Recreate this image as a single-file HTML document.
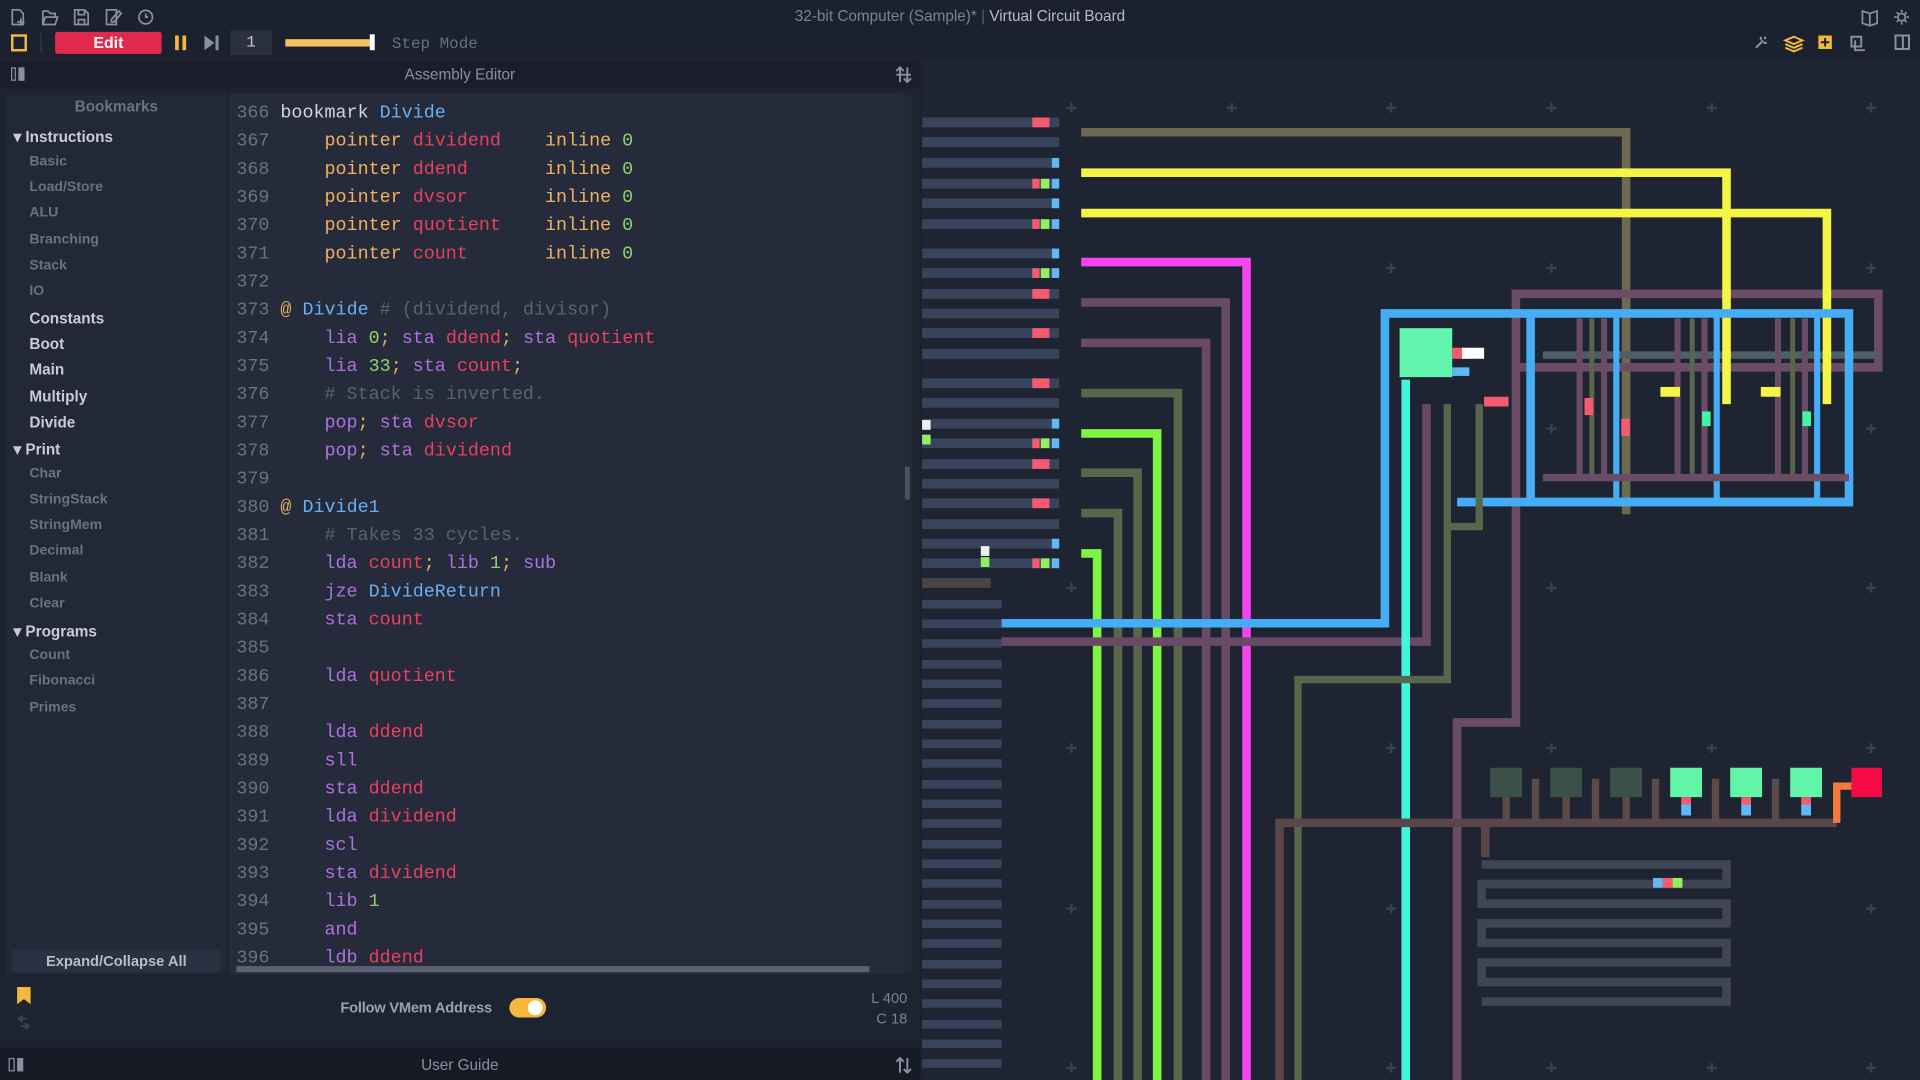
<!DOCTYPE html>
<html><head><meta charset="utf-8">
<style>
html,body{margin:0;padding:0;background:#1c2130;overflow:hidden;width:1920px;height:1080px}
#w{position:absolute;left:0;top:0;width:1568px;height:882px;transform:scale(1.2244898);transform-origin:0 0;font-family:"Liberation Sans",sans-serif;color:#9aa0ad}
.a{position:absolute}
.mono{font-family:"Liberation Mono",monospace}
.code{position:absolute;left:187px;top:76px;width:558px;height:720px;background:#252b3a;overflow:hidden}
.ln{position:absolute;left:6px;font-size:15px;color:#6a7180;font-family:"Liberation Mono",monospace;white-space:pre;line-height:23px}
.cl{position:absolute;left:42px;font-size:15px;font-family:"Liberation Mono",monospace;white-space:pre;color:#d0d4dc;line-height:23px}
.o{color:#b070e0}.r{color:#e8405e}.g{color:#90d070}.b{color:#6aaef0}.y{color:#f0b060}.c{color:#5a6272}.s{color:#e0b060}
.bm{position:absolute;font-size:11.5px;color:#6a7282;font-weight:bold}
.bh{position:absolute;font-size:12.5px;color:#c8ccd4;font-weight:bold}
</style></head><body><div id="w">
<div class="a" style="left:0;top:0;width:1568px;height:48px;background:#1c2130"></div>
<svg class="a" style="left:0;top:0" width="1568" height="48" fill="none" stroke="#8a90a0" stroke-width="1.4">
<path d="M10 8h6l3 3v9h-9z M17 15v6 M14 18h6"/>
<path d="M35 9h4l2 2h4v3 M35 9v11h10l2-6h-10l-2 6"/>
<path d="M61 8h8l3 3v9h-11z M64 8v4h5v-4 M64 20v-4h5v4"/>
<path d="M87 8h8v12h-8z M91 16l6-7 2 2-6 7h-2z"/>
<circle cx="119" cy="14" r="5.5"/><path d="M119 11v3h2"/>
<path d="M1521 9l6 2 6-2v10l-6 2-6-2z M1527 11v10"/>
<circle cx="1553" cy="14" r="3"/><path d="M1553 8v2M1553 18v2M1547 14h2M1557 14h2M1549 10l1.5 1.5M1555.5 16.5l1.5 1.5M1549 18l1.5-1.5M1555.5 11.5l1.5-1.5"/>
</svg>
<div class="a" style="left:0;top:6px;width:1568px;text-align:center;font-size:12.5px;color:#7c8292">32-bit Computer (Sample)* <span style="color:#555c6c">|</span> <span style="color:#b8bcc6">Virtual Circuit Board</span></div>
<div class="a" style="left:9px;top:28px;width:9px;height:10px;border:2px solid #f5b83d"></div>
<div class="a" style="left:33px;top:27px;width:1px;height:16px;background:#333a4a"></div>
<div class="a" style="left:45px;top:26px;width:87px;height:18px;background:#e2284c;border-radius:2px;color:#fff;font-weight:bold;font-size:13px;text-align:center;line-height:18px">Edit</div>
<div class="a" style="left:143px;top:29px;width:3px;height:12px;background:#f5b83d"></div>
<div class="a" style="left:149px;top:29px;width:3px;height:12px;background:#f5b83d"></div>
<svg class="a" style="left:166px;top:28px" width="14" height="14"><path d="M1 1l8 6-8 6z" fill="#8a90a0"/><rect x="10" y="1" width="2.5" height="12" fill="#8a90a0"/></svg>
<div class="a mono" style="left:188px;top:25px;width:34px;height:20px;background:#2a3040;color:#c0c4cc;font-size:13px;text-align:center;line-height:20px">1</div>
<div class="a" style="left:233px;top:32px;width:70px;height:6px;background:#f5c35d"></div>
<div class="a" style="left:302px;top:28px;width:4px;height:13px;background:#fff"></div>
<div class="a mono" style="left:320px;top:28px;font-size:13px;color:#6a7080">Step Mode</div>
<svg class="a" style="left:1430px;top:26px" width="138" height="18" fill="none" stroke-width="1.6">
<path d="M4 13l6-6M8 4v3M12 4l-1 2M13 9h-3" stroke="#8a90a0"/>
<path d="M35 4l7 3-7 3-7-3z M28 10l7 3 7-3 M28 13l7 3 7-3" stroke="#f5b83d"/>
<rect x="55" y="3" width="11" height="11" fill="#f5b83d" stroke="none"/><path d="M60.5 5v7M57 8.5h7" stroke="#1c2130"/>
<path d="M82 4h8v8h-8z M85 7v8h8" stroke="#8a90a0"/>
<rect x="118" y="3" width="11" height="11" stroke="#8a90a0"/><path d="M124 3v11" stroke="#8a90a0"/>
</svg>
<div class="a" style="left:0;top:48px;width:751px;height:800px;background:#1e2330"></div>
<div class="a" style="left:0;top:50px;width:751px;height:22px;background:#191e2a"></div>
<div class="a" style="left:9px;top:55px;width:4px;height:11px;border:1.5px solid #8a90a0;box-sizing:border-box"></div>
<div class="a" style="left:15px;top:55px;width:5px;height:11px;background:#8a90a0"></div>
<div class="a" style="left:0;top:54px;width:751px;text-align:center;font-size:12.5px;color:#8a90a0">Assembly Editor</div>
<svg class="a" style="left:731px;top:54px" width="14" height="14" stroke="#8a90a0" stroke-width="1.6" fill="none"><path d="M4 1v12M1 4l3-3 3 3M10 1v12M7 10l3 3 3-3M1 7h12"/></svg>
<div class="a" style="left:5px;top:76px;width:180px;height:720px;background:#232836"></div>
<div class="a" style="left:5px;top:80px;width:180px;text-align:center;font-size:12.5px;color:#6a7282;font-weight:bold">Bookmarks</div>
<div class="bh" style="left:11px;top:104px">▾ Instructions</div>
<div class="bm" style="left:24px;top:126px">Basic</div>
<div class="bm" style="left:24px;top:147px">Load/Store</div>
<div class="bm" style="left:24px;top:168px">ALU</div>
<div class="bm" style="left:24px;top:190px">Branching</div>
<div class="bm" style="left:24px;top:211px">Stack</div>
<div class="bm" style="left:24px;top:232px">IO</div>
<div class="bh" style="left:24px;top:253px">Constants</div>
<div class="bh" style="left:24px;top:274px">Boot</div>
<div class="bh" style="left:24px;top:295px">Main</div>
<div class="bh" style="left:24px;top:317px">Multiply</div>
<div class="bh" style="left:24px;top:338px">Divide</div>
<div class="bh" style="left:11px;top:359px">▾ Print</div>
<div class="bm" style="left:24px;top:381px">Char</div>
<div class="bm" style="left:24px;top:402px">StringStack</div>
<div class="bm" style="left:24px;top:423px">StringMem</div>
<div class="bm" style="left:24px;top:444px">Decimal</div>
<div class="bm" style="left:24px;top:466px">Blank</div>
<div class="bm" style="left:24px;top:487px">Clear</div>
<div class="bh" style="left:11px;top:508px">▾ Programs</div>
<div class="bm" style="left:24px;top:529px">Count</div>
<div class="bm" style="left:24px;top:550px">Fibonacci</div>
<div class="bm" style="left:24px;top:572px">Primes</div>
<div class="a" style="left:10px;top:776px;width:170px;height:18px;background:#2a3142;border-radius:2px;text-align:center;font-size:12px;line-height:18px;color:#b8bcc6;font-weight:bold">Expand/Collapse All</div>
<div class="code">
<div class="ln" style="top:5px">366
367
368
369
370
371
372
373
374
375
376
377
378
379
380
381
382
383
384
385
386
387
388
389
390
391
392
393
394
395
396</div>
<div class="cl" style="top:5px">bookmark <span class="b">Divide</span>
    <span class="y">pointer</span> <span class="r">dividend</span>    <span class="y">inline</span> <span class="g">0</span>
    <span class="y">pointer</span> <span class="r">ddend</span>       <span class="y">inline</span> <span class="g">0</span>
    <span class="y">pointer</span> <span class="r">dvsor</span>       <span class="y">inline</span> <span class="g">0</span>
    <span class="y">pointer</span> <span class="r">quotient</span>    <span class="y">inline</span> <span class="g">0</span>
    <span class="y">pointer</span> <span class="r">count</span>       <span class="y">inline</span> <span class="g">0</span>

<span class="s">@</span> <span class="b">Divide</span> <span class="c"># (dividend, divisor)</span>
    <span class="o">lia</span> <span class="g">0</span><span class="s">;</span> <span class="o">sta</span> <span class="r">ddend</span><span class="s">;</span> <span class="o">sta</span> <span class="r">quotient</span>
    <span class="o">lia</span> <span class="g">33</span><span class="s">;</span> <span class="o">sta</span> <span class="r">count</span><span class="s">;</span>
    <span class="c"># Stack is inverted.</span>
    <span class="o">pop</span><span class="s">;</span> <span class="o">sta</span> <span class="r">dvsor</span>
    <span class="o">pop</span><span class="s">;</span> <span class="o">sta</span> <span class="r">dividend</span>

<span class="s">@</span> <span class="b">Divide1</span>
    <span class="c"># Takes 33 cycles.</span>
    <span class="o">lda</span> <span class="r">count</span><span class="s">;</span> <span class="o">lib</span> <span class="g">1</span><span class="s">;</span> <span class="o">sub</span>
    <span class="o">jze</span> <span class="b">DivideReturn</span>
    <span class="o">sta</span> <span class="r">count</span>

    <span class="o">lda</span> <span class="r">quotient</span>

    <span class="o">lda</span> <span class="r">ddend</span>
    <span class="o">sll</span>
    <span class="o">sta</span> <span class="r">ddend</span>
    <span class="o">lda</span> <span class="r">dividend</span>
    <span class="o">scl</span>
    <span class="o">sta</span> <span class="r">dividend</span>
    <span class="o">lib</span> <span class="g">1</span>
    <span class="o">and</span>
    <span class="o">ldb</span> <span class="r">ddend</span></div>
<div class="a" style="left:550px;top:0;width:8px;height:720px;background:#222838"></div>
<div class="a" style="left:552px;top:305px;width:4px;height:27px;background:#4a5264"></div>
<div class="a" style="left:6px;top:713px;width:517px;height:5px;background:#5a6272"></div>
</div>
<svg class="a" style="left:13px;top:805px" width="14" height="40"><path d="M1 1h11v14l-5.5-4-5.5 4z" fill="#f5b83d"/><path d="M2 27l3-2v4zM11 33l-3 2v-4zM4 27h5M9 33H4" stroke="#3a4152" stroke-width="1.5" fill="#3a4152"/></svg>
<div class="a" style="left:278px;top:816px;font-size:12px;color:#9aa0ad;font-weight:bold;letter-spacing:-0.2px">Follow VMem Address</div>
<div class="a" style="left:416px;top:815px;width:30px;height:16px;border-radius:8px;background:#f5b83d"></div>
<div class="a" style="left:431px;top:817px;width:12px;height:12px;border-radius:6px;background:#fff"></div>
<div class="a" style="left:680px;top:807px;width:61px;text-align:right;font-size:12px;color:#7a8090;line-height:17px">L 400<br>C 18</div>
<div class="a" style="left:0;top:856px;width:751px;height:26px;background:#161a25"></div>
<div class="a" style="left:7px;top:864px;width:5px;height:11px;border:1.5px solid #8a90a0;box-sizing:border-box"></div>
<div class="a" style="left:14px;top:864px;width:5px;height:11px;background:#8a90a0"></div>
<div class="a" style="left:0;top:863px;width:751px;text-align:center;font-size:12.5px;color:#8a90a0">User Guide</div>
<svg class="a" style="left:731px;top:863px" width="14" height="14" stroke="#8a90a0" stroke-width="1.6" fill="none"><path d="M4 1v12M1 4l3-3 3 3M10 1v12M7 10l3 3 3-3"/></svg>
<svg class="a" style="left:753px;top:48px" width="815" height="834" viewBox="753 48 815 834">
<rect x="753" y="48" width="815" height="834" fill="#1f2433"/>
<g stroke="#394053" stroke-width="2">
<path d="M871 88h8M875 84v8M1002 88h8M1006 84v8M1132 88h8M1136 84v8M1263 88h8M1267 84v8M1394 88h8M1398 84v8M1524 88h8M1528 84v8
M1132 219h8M1136 215v8M1263 219h8M1267 215v8M1524 219h8M1528 215v8M1524 350h8M1528 346v8M1263 350h8M1267 346v8
M871 480h8M875 476v8M1263 480h8M1267 476v8M1524 480h8M1528 476v8
M871 611h8M875 607v8M1132 611h8M1136 607v8M1263 611h8M1267 607v8M1394 611h8M1398 607v8M1524 611h8M1528 607v8
M871 742h8M875 738v8M1132 742h8M1136 738v8M1524 742h8M1528 738v8M871 872h8M875 868v8M1132 872h8M1136 868v8M1263 872h8M1267 868v8M1394 872h8M1398 868v8M1524 872h8M1528 868v8"/>
</g>
<g fill="#38435c">
<rect x="753" y="96" width="112" height="8"/><rect x="753" y="112" width="112" height="8"/>
<rect x="753" y="129" width="112" height="8"/><rect x="753" y="146" width="112" height="8"/>
<rect x="753" y="162" width="112" height="8"/><rect x="753" y="179" width="112" height="8"/>
<rect x="753" y="203" width="112" height="8"/><rect x="753" y="219" width="112" height="8"/>
<rect x="753" y="236" width="112" height="8"/><rect x="753" y="252" width="112" height="8"/>
<rect x="753" y="268" width="112" height="8"/><rect x="753" y="285" width="112" height="8"/>
<rect x="753" y="309" width="112" height="8"/><rect x="753" y="325" width="112" height="8"/>
<rect x="753" y="342" width="112" height="8"/><rect x="753" y="358" width="112" height="8"/>
<rect x="753" y="375" width="112" height="8"/><rect x="753" y="391" width="112" height="8"/>
<rect x="753" y="407" width="112" height="8"/><rect x="753" y="424" width="112" height="8"/>
<rect x="753" y="440" width="112" height="8"/><rect x="753" y="456" width="112" height="8"/>
</g>
<g fill="#f55a70"><rect x="843" y="96" width="14" height="8"/><rect x="843" y="146" width="6" height="8"/><rect x="843" y="179" width="6" height="8"/><rect x="843" y="219" width="6" height="8"/><rect x="843" y="236" width="14" height="8"/><rect x="843" y="268" width="14" height="8"/><rect x="843" y="309" width="14" height="8"/><rect x="843" y="358" width="6" height="8"/><rect x="843" y="375" width="14" height="8"/><rect x="843" y="407" width="14" height="8"/><rect x="843" y="456" width="6" height="8"/></g>
<g fill="#60b8f5"><rect x="859" y="129" width="6" height="8"/><rect x="859" y="146" width="6" height="8"/><rect x="859" y="162" width="6" height="8"/><rect x="859" y="179" width="6" height="8"/><rect x="859" y="203" width="6" height="8"/><rect x="859" y="219" width="6" height="8"/><rect x="859" y="342" width="6" height="8"/><rect x="859" y="358" width="6" height="8"/><rect x="859" y="440" width="6" height="8"/><rect x="859" y="456" width="6" height="8"/></g>
<g fill="#90f060"><rect x="850" y="146" width="7" height="8"/><rect x="850" y="179" width="7" height="8"/><rect x="850" y="219" width="7" height="8"/><rect x="850" y="358" width="7" height="8"/><rect x="850" y="456" width="7" height="8"/><rect x="753" y="355" width="7" height="8"/><rect x="801" y="455" width="7" height="8"/></g>
<rect x="753" y="343" width="7" height="8" fill="#eee"/><rect x="801" y="446" width="7" height="8" fill="#eee"/>
<rect x="753" y="472" width="56" height="8" fill="#4a4446"/>
<g fill="#38435c">
<rect x="753" y="490" width="65" height="7"/><rect x="753" y="506" width="65" height="7"/><rect x="753" y="522" width="65" height="7"/><rect x="753" y="539" width="65" height="7"/><rect x="753" y="555" width="65" height="7"/><rect x="753" y="571" width="65" height="7"/><rect x="753" y="588" width="65" height="7"/><rect x="753" y="604" width="65" height="7"/><rect x="753" y="620" width="65" height="7"/><rect x="753" y="637" width="65" height="7"/><rect x="753" y="653" width="65" height="7"/><rect x="753" y="669" width="65" height="7"/><rect x="753" y="686" width="65" height="7"/><rect x="753" y="702" width="65" height="7"/><rect x="753" y="718" width="65" height="7"/><rect x="753" y="735" width="65" height="7"/><rect x="753" y="751" width="65" height="7"/><rect x="753" y="767" width="65" height="7"/><rect x="753" y="784" width="65" height="7"/><rect x="753" y="800" width="65" height="7"/><rect x="753" y="816" width="65" height="7"/><rect x="753" y="833" width="65" height="7"/><rect x="753" y="849" width="65" height="7"/><rect x="753" y="865" width="65" height="7"/>
</g>
<g fill="none" stroke-width="7" stroke-linejoin="miter">
<path d="M883 108H1328V420" stroke="#6e6a52"/>
<path d="M1238 300V240H1534V300H1238M1238 240V590H1190V882" stroke="#6a4c64"/>
<path d="M1260 290H1534" stroke="#4e6066" stroke-width="6"/>
<path d="M883 247H1001V882M883 280H985V882" stroke="#684a66"/>
<path d="M883 321H962V882M883 386H929V882M883 419H913V882" stroke="#59664c"/>
<path d="M883 141H1410V330M883 174H1492V330" stroke="#f5f545"/>
<path d="M883 214H1018V882" stroke="#f545f0"/>
<path d="M883 354H945V882M883 452H896V882" stroke="#7df542"/>
<path d="M818 524H1165V330" stroke="#684a66"/>
<path d="M818 509H1131V256H1510V410H1250V256" stroke="#45adf5"/>
<path d="M1190 410H1510" stroke="#45adf5"/>
<path d="M1320 256V410M1402 256V410M1484 256V410" stroke="#45adf5" stroke-width="5"/>
<path d="M1148 310V882" stroke="#42f5dd"/>
<path d="M1182 330V555H1060V882" stroke="#59664c" stroke-width="6"/>
<path d="M1208 330V430H1182" stroke="#59664c" stroke-width="6"/>
<path d="M1290 260V390M1310 260V390M1370 260V390M1392 260V390M1452 260V390M1474 260V390" stroke="#6a4c64" stroke-width="5"/>
<path d="M1300 260V390M1382 260V390M1464 260V390" stroke="#59664c" stroke-width="4"/>
<path d="M1260 390H1510" stroke="#6a4c64" stroke-width="6"/>
<path d="M1045 882V672H1500M1213 672V700" stroke="#5a4648"/>
<path d="M1230 650V672M1279 650V672M1328 650V672M1254 636V672M1303 636V672M1352 636V672M1401 636V672M1450 636V672" stroke="#5a4a48" stroke-width="6"/>
<path d="M1500 672V642H1520" stroke="#f57a40" stroke-width="6"/>
<path d="M1210 706H1410V722H1210V738H1410V754H1210V770H1410V786H1210V802H1410V818H1210" stroke="#404556" stroke-width="7"/>
</g>
<rect x="1143" y="268" width="43" height="40" fill="#62f5ae"/>
<rect x="1186" y="284" width="12" height="9" fill="#f55a70"/><rect x="1194" y="284" width="18" height="9" fill="#fff"/>
<rect x="1212" y="324" width="20" height="8" fill="#f55a70"/><rect x="1186" y="300" width="14" height="7" fill="#60b8f5"/>
<rect x="1356" y="316" width="16" height="8" fill="#f5f545"/><rect x="1438" y="316" width="16" height="8" fill="#f5f545"/>
<rect x="1294" y="325" width="7" height="14" fill="#f55a70"/><rect x="1324" y="342" width="7" height="14" fill="#f55a70"/>
<rect x="1390" y="336" width="7" height="12" fill="#42f5a0"/><rect x="1472" y="336" width="7" height="12" fill="#42f5a0"/>
<g fill="#3a5048"><rect x="1217" y="627" width="26" height="24"/><rect x="1266" y="627" width="26" height="24"/><rect x="1315" y="627" width="26" height="24"/></g>
<g fill="#62f5a8"><rect x="1364" y="627" width="26" height="24"/><rect x="1413" y="627" width="26" height="24"/><rect x="1462" y="627" width="26" height="24"/></g>
<g fill="#f55a70"><rect x="1373" y="651" width="8" height="6"/><rect x="1422" y="651" width="8" height="6"/><rect x="1471" y="651" width="8" height="6"/></g>
<g fill="#60b8f5"><rect x="1373" y="657" width="8" height="9"/><rect x="1422" y="657" width="8" height="9"/><rect x="1471" y="657" width="8" height="9"/></g>
<rect x="1512" y="627" width="25" height="24" fill="#f50a45"/>
<rect x="1350" y="717" width="8" height="8" fill="#60b8f5"/><rect x="1358" y="717" width="8" height="8" fill="#f55a70"/><rect x="1366" y="717" width="8" height="8" fill="#90f060"/>
</svg>
</div></body></html>
